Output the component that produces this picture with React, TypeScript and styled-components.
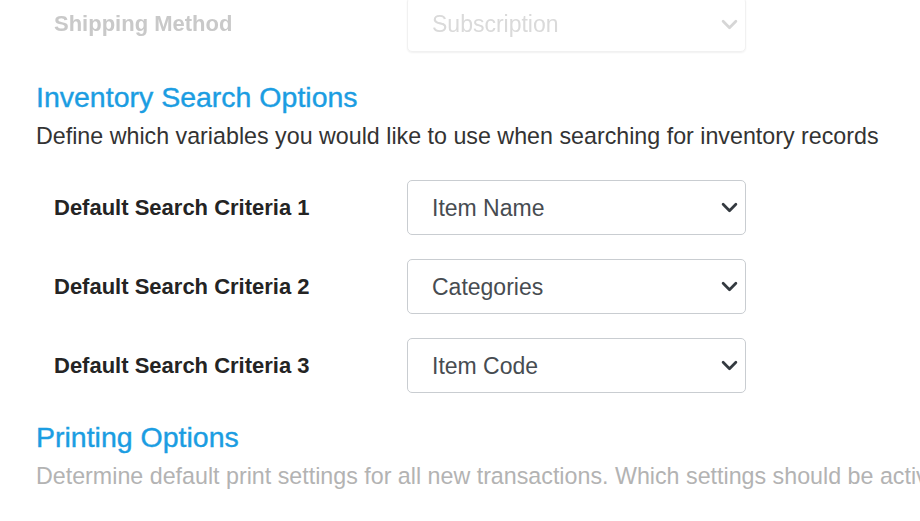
import React from "react";
import styled, { createGlobalStyle } from "styled-components";

const GlobalStyle = createGlobalStyle`
  html, body {
    margin: 0;
    padding: 0;
    background: #ffffff;
  }
  body {
    font-family: "Liberation Sans", Arial, Helvetica, sans-serif;
    color: #333333;
  }
`;

const Page = styled.div`
  width: 920px;
  height: 521px;
  overflow: hidden;
  padding-left: 36px;
  box-sizing: border-box;
  display: flex;
  flex-direction: column;
`;

const Row = styled.div<{ $first?: boolean }>`
  display: flex;
  align-items: center;
  padding-left: 18px;
  margin-top: ${(p) => (p.$first ? "-3.5px" : "24px")};
`;

const RowGroup = styled.div`
  display: flex;
  flex-direction: column;
  margin-top: 26.8px;
`;

const Label = styled.div<{ $faded?: boolean }>`
  width: 353px;
  flex: none;
  font-size: 22px;
  font-weight: 700;
  line-height: 26px;
  color: ${(p) => (p.$faded ? "#c9c9c9" : "#242424")};
  ${(p) => (p.$faded ? "filter: blur(0.5px);" : "")}
`;

const SelectBox = styled.div<{ $faded?: boolean }>`
  width: 339px;
  height: 55px;
  box-sizing: border-box;
  display: flex;
  align-items: center;
  justify-content: space-between;
  padding: 0 7px 0 24px;
  border: 1px solid ${(p) => (p.$faded ? "#f1f1f1" : "#c9cdd1")};
  border-radius: 5px;
  background: #ffffff;
  box-shadow: ${(p) => (p.$faded ? "0 1px 2px rgba(0,0,0,0.06)" : "none")};
  ${(p) => (p.$faded ? "filter: blur(0.4px);" : "")}
`;

const SelectText = styled.span<{ $faded?: boolean }>`
  font-size: 23px;
  line-height: 28px;
  color: ${(p) => (p.$faded ? "#dadada" : "#474c51")};
`;

const Chevron = styled.svg<{ $faded?: boolean }>`
  width: 17px;
  height: 17px;
  flex: none;
  color: ${(p) => (p.$faded ? "#d6d6d6" : "#343a40")};
`;

const Heading = styled.h2<{ $gap: number }>`
  margin: ${(p) => p.$gap}px 0 0 0;
  font-size: 28.5px;
  line-height: 34.2px;
  font-weight: 400;
  color: #1b9de2;
  -webkit-text-stroke: 0.4px #1b9de2;
  white-space: nowrap;
`;

const Description = styled.p<{ $faded?: boolean }>`
  margin: 5px 0 0 0;
  font-size: 23.25px;
  line-height: 34.5px;
  color: ${(p) => (p.$faded ? "#b3b3b3" : "#333333")};
  white-space: nowrap;
`;

type SelectProps = { value: string; faded?: boolean };

const Select: React.FC<SelectProps> = ({ value, faded }) => (
  <SelectBox $faded={faded}>
    <SelectText $faded={faded}>{value}</SelectText>
    <Chevron $faded={faded} viewBox="0 0 16 16" fill="none">
      <path
        d="M2 5l6 6 6-6"
        stroke="currentColor"
        strokeWidth="2.6"
        strokeLinecap="round"
        strokeLinejoin="round"
      />
    </Chevron>
  </SelectBox>
);

const criteria = [
  { label: "Default Search Criteria 1", value: "Item Name" },
  { label: "Default Search Criteria 2", value: "Categories" },
  { label: "Default Search Criteria 3", value: "Item Code" },
];

export default function App() {
  return (
    <>
      <GlobalStyle />
      <Page>
        <Row $first>
          <Label $faded>Shipping Method</Label>
          <Select value="Subscription" faded />
        </Row>

        <Heading $gap={28}>Inventory Search Options</Heading>
        <Description>
          Define which variables you would like to use when searching for inventory records
        </Description>

        <RowGroup>
          {criteria.map((c, i) => (
            <Row key={c.label} $first={false} style={i === 0 ? { marginTop: 0 } : undefined}>
              <Label>{c.label}</Label>
              <Select value={c.value} />
            </Row>
          ))}
        </RowGroup>

        <Heading $gap={27.2}>Printing Options</Heading>
        <Description $faded>
          Determine default print settings for all new transactions. Which settings should be active by default?
        </Description>
      </Page>
    </>
  );
}
